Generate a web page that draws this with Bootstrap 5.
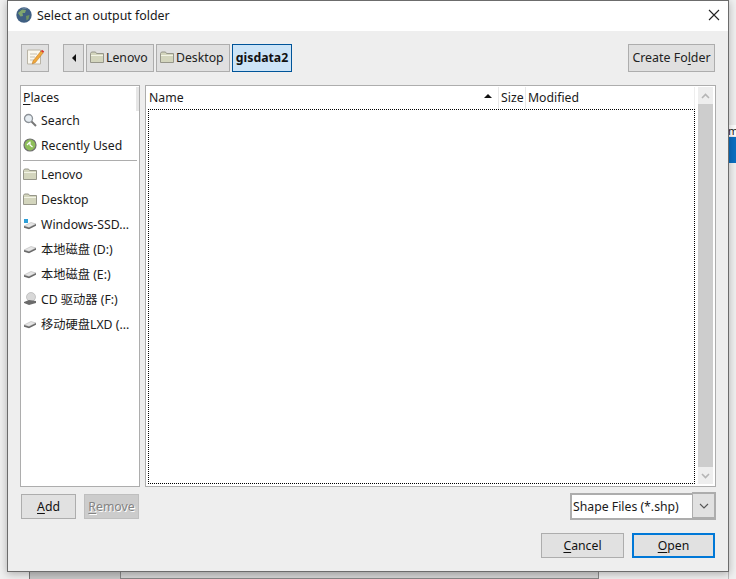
<!DOCTYPE html>
<html lang="en"><head><meta charset="utf-8"><title>Select an output folder</title>
<link href="https://cdn.jsdelivr.net/npm/bootstrap@5.3.0/dist/css/bootstrap.min.css" rel="stylesheet">
<style>
html,body{margin:0;width:736px;height:579px;overflow:hidden;background:#f0f0f0}
body{font:12.25px/1.2 "Noto Sans","Noto Sans CJK SC",sans-serif;color:#1a1a1a;position:relative}
.bk{position:absolute;display:block}
.bk-a{left:29px;top:560px;width:92px;height:19px;border-left:1px solid #777;background:#c8c8c8}
.bk-b{left:120px;top:560px;width:479px;height:19px;background:#d6d6d6;border:1px solid #888}
.bk-c{left:728px;top:0;width:8px;height:579px;background:#f0f0f0;border-left:1px solid #bbb}
.bk-d{left:728px;top:137px;width:8px;height:26px;background:#0a6fc2}
.bk-e{left:728px;top:125px;width:8px;height:11px;background:#fff;color:#222;font-size:11px;line-height:11px;overflow:hidden}
.dlg{position:relative;margin-left:7px;width:722px;height:572px;background:#eee;border:1px solid #6c6c6c;box-shadow:0 2px 8px rgba(0,0,0,.28)}
.ttl{height:30px;background:#fff;padding-left:8px}
.ttl-ic{margin-bottom:2px}
.ttl-tx{font-size:12.4px;margin-left:5px}
.xbtn{margin-left:auto;margin-right:8px;margin-top:-2px}
.tb{margin:13px 13px 0 13px;height:28px}
.qb{background:#e0e0e0;border:1px solid #adadad;height:28px;padding:0;color:#222;white-space:nowrap;font-size:12.25px}
.qb-ed{width:28px;margin-right:14px;padding-bottom:2px}
.qb-bk{width:21px;margin-right:2px}
.qb-le,.qb-de{justify-content:flex-start;gap:2px;padding-left:3px}
.qb-le svg,.qb-de svg{margin-bottom:2px}
.qb-le{width:68px;margin-right:2px}
.qb-de{width:74px;margin-right:2px}
.qb-gi{width:60px;background:#cce4f7;border-color:#005499;font-weight:700;color:#111}
.qb-cr{width:87px;margin-left:auto;font-size:12.4px}
.u{text-decoration:underline;text-underline-offset:2px}
.mid{margin:13px 12px 0 12px;height:402px;gap:5px}
.pl{width:120px;background:#fff;border:1px solid #adadad;position:relative}
.pl-hd{height:22px;padding:4px 0 0 2px;line-height:15px}
.pl-bar{position:absolute;right:0;top:1px;width:3px;height:24px;background:#e6e6e6}
.pl-r{height:25px;padding-left:2px;gap:4px;white-space:nowrap;overflow:hidden}
.pl-r svg{margin-bottom:1px}
.pl-r span{padding-top:2px}
.pl-sep{height:1px;background:#adadad;margin:2px 2px 1px 2px}
.fl{flex:1 1 0;background:#fff;border:1px solid #adadad;padding:1px 2px 2px 2px}
.fl-main{flex:1 1 0;min-width:0}
.fl-hd{height:22px;line-height:22px;border-right:1px solid #eee}
.hd-nm{flex:1 1 0;padding-left:1px;border-right:1px solid #e8e8e8;position:relative}
.sort{position:absolute;right:6px;top:7px;width:0;height:0;border:4px solid transparent;border-top:0;border-bottom:4px solid #111}
.hd-sz{width:27px;padding-left:2px;border-right:1px solid #e8e8e8}
.hd-mo{width:168px;padding-left:2px}
.dots{flex:1 1 0;border:1px dotted #000;background:#fff}
.sb{width:15px;margin-left:3px;background:#eee}
.sb-btn{height:17px;background:#eee;line-height:0}
.sb-th{flex:1 1 0;background:#cdcdcd}
.bot{margin:6px 12px 0 13px;height:27px}
.small-b{width:55px;height:25px;margin-right:8px;background:#e1e1e1;border:1px solid #adadad;padding:2px 0 0;color:#111;font-size:12.25px;margin-top:1px}
.small-b.rm{background:#ccc;border-color:#bfbfbf;color:#838383;text-shadow:1px 1px 0 #fff}
.cb{margin-left:auto;width:146px;height:27px;background:#fff;border:2px solid #adadad;border-right:0;padding-left:1px}
.cb-tx{flex:1 1 0;white-space:nowrap;padding-top:2px}
.cb-ar{width:24px;height:27px;margin-top:-2px;background:#e1e1e1;border:2px solid #adadad;border-left:1px solid #adadad;flex:none}
.act{margin:13px 13px 0 0;gap:8px}
.ab{width:83px;height:25px;background:#e1e1e1;border:1px solid #adadad;padding:2px 0 0;color:#111;font-size:12.25px}
.ab.pr{border:2px solid #0078d7;padding:1px 0 0}
</style></head>
<body>
<svg width="0" height="0" class="bk" aria-hidden="true"><defs>
<symbol id="fo" viewBox="0 0 14 12"><path d="M.5 2.500 1.500 1h4l1 1.500h7v9h-13z" fill="#d3d5bd" stroke="#96968a"/><path d="M1 4.500h12" stroke="#f2f3e5"/></symbol>
<symbol id="dr" viewBox="0 0 14 10"><path d="M1 6 8 2.500 13 4 6 7.500z" fill="#e6e6e6" stroke="#b5b5b5" stroke-width=".6"/><path d="M1 6 6 7.500 13 4v1.800L6 9.300 1 7.800z" fill="#6b6b6b"/></symbol>
</defs></svg>
<span class="bk bk-a"></span><span class="bk bk-b"></span><span class="bk bk-c"></span><span class="bk bk-e">m</span><span class="bk bk-d"></span>
<div class="dlg d-flex flex-column">
 <div class="ttl d-flex align-items-center">
  <svg class="ttl-ic" width="16" height="16" viewBox="0 0 16 16"><circle cx="8" cy="8" r="7.700" fill="#3f5f82"/><path d="M2 6 6 2.500 10 3 9 6 6.500 6 7 9 4.500 9.500z" fill="#7fa56f"/><path d="M10 9l3.500-1-1 4-2 1.500z" fill="#6f9462"/><path d="M3 3.500A7 7 0 0 1 12 2.500 6 4 0 0 0 3 3.500z" fill="#dfe9f2"/></svg>
  <span class="ttl-tx">Select an output folder</span>
  <svg class="xbtn" width="12" height="12" viewBox="0 0 12 12"><path d="M1 1l10 10M11 1 1 11" stroke="#222" stroke-width="1.100"/></svg>
 </div>
 <div class="tb d-flex">
  <button class="qb qb-ed d-flex align-items-center justify-content-center" type="button" aria-label="Edit"><svg width="20" height="20" viewBox="0 0 20 20"><path d="M2.500 3h13v14h-13z" fill="#fbf8ee" stroke="#b9b4a6"/><path d="M5 7h7M5 10h5M5 13h4" stroke="#c5c0b2"/><path d="M8 14 16 4l2.200 1.800-8 10-3 1z" fill="#f2a93b" stroke="#b06c1a" stroke-width=".5"/><path d="M16 4l1-1.300 2.200 1.800-1 1.300z" fill="#d8302a"/></svg></button>
  <button class="qb qb-bk d-flex align-items-center justify-content-center" type="button" aria-label="Back"><svg width="4" height="8" viewBox="0 0 4 8"><path d="M4 0v8L0 4z" fill="#111"/></svg></button>
  <button class="qb qb-le d-flex align-items-center" type="button"><svg width="14" height="12"><use href="#fo"/></svg>Lenovo</button>
  <button class="qb qb-de d-flex align-items-center" type="button"><svg width="14" height="12"><use href="#fo"/></svg>Desktop</button>
  <button class="qb qb-gi" type="button">gisdata2</button>
  <button class="qb qb-cr" type="button">Create Fo<span class="u">l</span>der</button>
 </div>
 <div class="mid d-flex">
  <div class="pl">
   <div class="pl-hd"><span class="u">P</span>laces</div><span class="pl-bar"></span>
   <div class="pl-r d-flex align-items-center"><svg width="14" height="14" viewBox="0 0 14 14"><circle cx="5.500" cy="5.500" r="4" fill="#e6edf2" stroke="#8d9298" stroke-width="1.300"/><path d="M8.500 8.500l4.500 4.500" stroke="#777" stroke-width="2"/></svg><span>Search</span></div>
   <div class="pl-r d-flex align-items-center"><svg width="14" height="14" viewBox="0 0 14 14"><circle cx="7" cy="7" r="6" fill="#8fbf5a" stroke="#6f6f6f" stroke-width="1.200"/><path d="M7 3.500V7l2.500 2M4 7l3-3" stroke="#fff" stroke-width="1.200" fill="none"/></svg><span>Recently Used</span></div>
   <div class="pl-sep"></div>
   <div class="pl-r d-flex align-items-center"><svg width="14" height="12"><use href="#fo"/></svg><span>Lenovo</span></div>
   <div class="pl-r d-flex align-items-center"><svg width="14" height="12"><use href="#fo"/></svg><span>Desktop</span></div>
   <div class="pl-r d-flex align-items-center"><svg width="14" height="12" viewBox="0 0 14 12"><path d="M1 1h4v4H1z" fill="#2d9fd8"/><use href="#dr" y="2" width="14" height="10"/></svg><span>Windows-SSD...</span></div>
   <div class="pl-r d-flex align-items-center"><svg width="14" height="10"><use href="#dr"/></svg><span>本地磁盘 (D:)</span></div>
   <div class="pl-r d-flex align-items-center"><svg width="14" height="10"><use href="#dr"/></svg><span>本地磁盘 (E:)</span></div>
   <div class="pl-r d-flex align-items-center"><svg width="14" height="14" viewBox="0 0 14 14"><circle cx="8" cy="5" r="4.500" fill="#d8d8d8" stroke="#aaa" stroke-width=".6"/><path d="M1 10l5-2 7 1v2l-7 2-5-2z" fill="#6b6b6b"/></svg><span>CD 驱动器 (F:)</span></div>
   <div class="pl-r d-flex align-items-center"><svg width="14" height="10"><use href="#dr"/></svg><span>移动硬盘LXD (...</span></div>
  </div>
  <div class="fl d-flex">
   <div class="fl-main d-flex flex-column">
    <div class="fl-hd d-flex"><div class="hd-nm">Name<span class="sort"></span></div><div class="hd-sz">Size</div><div class="hd-mo">Modified</div></div>
    <div class="dots"></div>
   </div>
   <div class="sb d-flex flex-column">
    <div class="sb-btn d-flex align-items-center justify-content-center"><svg width="9" height="6" viewBox="0 0 9 6"><path d="M1 5l3.500-3.500L8 5" fill="none" stroke="#b5b5b5" stroke-width="1.600"/></svg></div>
    <div class="sb-th"></div>
    <div class="sb-btn d-flex align-items-center justify-content-center"><svg width="9" height="6" viewBox="0 0 9 6"><path d="M1 1l3.500 3.500L8 1" fill="none" stroke="#b5b5b5" stroke-width="1.600"/></svg></div>
   </div>
  </div>
 </div>
 <div class="bot d-flex">
  <button class="small-b" type="button"><span class="u">A</span>dd</button>
  <button class="small-b rm" type="button"><span class="u">R</span>emove</button>
  <div class="cb d-flex align-items-center"><span class="cb-tx">Shape Files (*.shp)</span><span class="cb-ar d-flex align-items-center justify-content-center"><svg width="10" height="6" viewBox="0 0 10 6"><path d="M1 1l4 4 4-4" fill="none" stroke="#555" stroke-width="1.100"/></svg></span></div>
 </div>
 <div class="act d-flex justify-content-end">
  <button class="ab" type="button"><span class="u">C</span>ancel</button>
  <button class="ab pr" type="button"><span class="u">O</span>pen</button>
 </div>
</div>
</body></html>
